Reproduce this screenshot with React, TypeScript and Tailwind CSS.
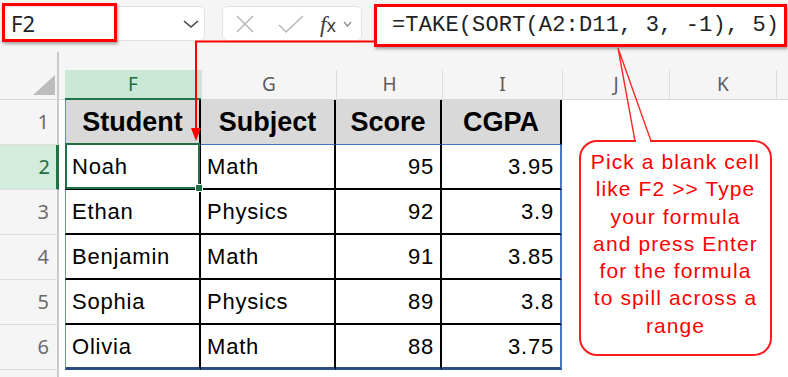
const students = [
  { name: "Noah", subject: "Math", score: 95, cgpa: "3.95" },
  { name: "Ethan", subject: "Physics", score: 92, cgpa: "3.9" },
  { name: "Benjamin", subject: "Math", score: 91, cgpa: "3.85" },
  { name: "Sophia", subject: "Physics", score: 89, cgpa: "3.8" },
  { name: "Olivia", subject: "Math", score: 88, cgpa: "3.75" },
];

const letters = ["G", "H", "I", "J", "K", ""];

const cellFont = "font-['Liberation_Sans',Arial,sans-serif]";
const uiFont = "font-['Noto_Sans','Liberation_Sans',sans-serif]";

function RowHead({ n, active }: { n: number; active?: boolean }) {
  return (
    <div
      className={`flex items-center justify-end border-b border-b-[#dedede] text-[20px] ${uiFont} ${
        active
          ? "bg-[#d3ecdc] text-[#1d6b40] border-r-[3px] border-r-[#217346] pr-[6px]"
          : "bg-[#f5f5f5] text-[#6b6b6b] border-r-2 border-r-[#c9c9c9] pr-[8px]"
      }`}
    >
      {n}
    </div>
  );
}

function HeadCell({ label, first }: { label: string; first?: boolean }) {
  return (
    <div
      className={`flex items-center justify-center bg-[#d9d9d9] border-r-2 border-r-black border-b border-b-[#4472c4] text-[27px] font-bold text-black ${cellFont} ${
        first ? "border-l border-l-[#6a8fcc]" : ""
      }`}
    >
      {label}
    </div>
  );
}

function DataCell({
  value,
  right,
  first,
  last,
  bottom,
  selected,
}: {
  value: string | number;
  right?: boolean;
  first?: boolean;
  last?: boolean;
  bottom?: boolean;
  selected?: boolean;
}) {
  return (
    <div
      className={`relative flex items-center bg-white px-[6px] text-[22px] tracking-[0.8px] text-black ${cellFont} ${
        right ? "justify-end" : "justify-start"
      } ${first ? "border-l border-l-[#6a8fcc]" : ""} ${
        last ? "border-r-2 border-r-[#4a76c0]" : "border-r-2 border-r-black"
      } ${bottom ? "border-b-[3px] border-b-[#2c4d80]" : "border-b-2 border-b-black"}`}
    >
      {value}
      {selected && (
        <div className="absolute -left-[1px] -top-[2px] -right-[1px] -bottom-[1px] z-10 border-2 border-[#1f7145]">
          <div className="absolute -right-[5px] -bottom-[5px] h-[8px] w-[8px] border border-white bg-[#1f7145]" />
        </div>
      )}
    </div>
  );
}

export default function App() {
  return (
    <div className="relative h-[377px] w-[788px] overflow-hidden bg-[#f5f5f5]">
      {/* formula bar */}
      <div className="flex h-[52px] items-start">
        <div className="ml-[4px] mt-[6px] flex h-[35px] w-[201px] items-center justify-between rounded-[5px] border border-[#e3e3e3] bg-white pl-[6px] pr-[5px]">
          <span className={`text-[22px] text-[#222] ${uiFont}`}>F2</span>
          <svg width="16" height="10" viewBox="0 0 16 10">
            <polyline points="1,2 8,8 15,2" fill="none" stroke="#444" strokeWidth="1.6" />
          </svg>
        </div>
        <div className="ml-[17px] mt-[6px] flex h-[35px] w-[140px] items-center rounded-[5px] border border-[#e3e3e3] bg-white pl-[12px]">
          <svg width="20" height="20" viewBox="0 0 20 20">
            <line x1="2" y1="2" x2="18" y2="18" stroke="#b8b8b8" strokeWidth="1.6" />
            <line x1="18" y1="2" x2="2" y2="18" stroke="#b8b8b8" strokeWidth="1.6" />
          </svg>
          <svg width="28" height="20" viewBox="0 0 28 20" className="ml-[22px]">
            <polyline points="2,11 9,18 26,2" fill="none" stroke="#b8b8b8" strokeWidth="1.6" />
          </svg>
          <span className="ml-[15px] text-[23px] leading-none text-[#3c3c3c]">
            <span className="font-['Liberation_Serif',serif] italic">f</span>
            <span className={`text-[18px] ${uiFont}`}>x</span>
          </span>
          <svg width="9" height="6" viewBox="0 0 9 6" className="ml-[7px]">
            <polyline points="1,1 4.5,5 8,1" fill="none" stroke="#888" strokeWidth="1.2" />
          </svg>
        </div>
        <div className="ml-[13px] mt-[5px] flex h-[41px] w-[412px] items-center bg-white pl-[17px]">
          <span className="font-['Liberation_Mono',monospace] text-[22px] tracking-[0.15px] text-[#222] whitespace-nowrap">
            =TAKE(SORT(A2:D11, 3, -1), 5)
          </span>
        </div>
      </div>

      {/* sheet */}
      <div className="grid h-[325px] grid-cols-[59px_6px_136px_135px_106px_120px_107px_107px_1fr] grid-rows-[48px_45px_45px_45px_45px_45px_45px_1fr]">
        <div className="flex items-end justify-end border-r-2 border-r-[#c9c9c9] border-b border-b-[#d5d5d5] pb-[4px] pr-[2px]">
          <svg width="22" height="20" viewBox="0 0 22 20">
            <polygon points="22,0 22,20 0,20" fill="#bcbcbc" />
          </svg>
        </div>
        <div className="border-b border-b-[#d5d5d5]" />
        <div className="pt-[18px]">
          <div className={`flex h-full items-center justify-center border-b-2 border-b-[#217346] bg-[#cbe8d6] text-[19px] text-[#1e6b41] ${uiFont}`}>
            F
          </div>
        </div>
        {letters.map((l, i) => (
          <div key={i} className="border-b border-b-[#d5d5d5] pt-[18px]">
            <div className={`flex h-full items-center justify-center border-l border-l-[#dcdcdc] text-[19px] text-[#5c5c5c] ${uiFont}`}>
              {l}
            </div>
          </div>
        ))}

        {/* row 1: table header */}
        <RowHead n={1} />
        <div className="bg-white" />
        <HeadCell label="Student" first />
        <HeadCell label="Subject" />
        <HeadCell label="Score" />
        <HeadCell label="CGPA" />
        <div className="bg-white" />
        <div className="bg-white" />
        <div className="bg-white" />

        {students.map((s, i) => (
          <div key={s.name} className="contents">
            <RowHead n={i + 2} active={i === 0} />
            <div className="bg-white" />
            <DataCell value={s.name} first bottom={i === 4} selected={i === 0} />
            <DataCell value={s.subject} bottom={i === 4} />
            <DataCell value={s.score} right bottom={i === 4} />
            <DataCell value={s.cgpa} right last bottom={i === 4} />
            <div className="bg-white" />
            <div className="bg-white" />
            <div className="bg-white" />
          </div>
        ))}

        <div className="border-r-2 border-r-[#c9c9c9] bg-[#f5f5f5]" />
        <div className="col-span-8 bg-white" />
      </div>

      {/* highlight boxes */}
      <div className="absolute left-[2px] top-[3px] h-[39px] w-[115px] border-[3px] border-[#ff0000] shadow-[1px_2px_3px_rgba(0,0,0,0.35)]" />
      <div className="absolute left-[374px] top-[4px] h-[43px] w-[413px] border-[3px] border-[#ff0000] shadow-[1px_2px_3px_rgba(0,0,0,0.35)]" />

      {/* callout */}
      <div
        className={`absolute left-[579px] top-[140px] h-[216px] w-[193px] rounded-[18px] border-2 border-[#ff1a1a] bg-white pt-[6px] text-center text-[21px] leading-[27.3px] tracking-[1.1px] text-[#ff0000] ${cellFont}`}
      >
        Pick a blank cell
        <br />
        like F2 &gt;&gt; Type
        <br />
        your formula
        <br />
        and press Enter
        <br />
        for the formula
        <br />
        to spill across a
        <br />
        range
      </div>

      {/* connectors */}
      <svg className="pointer-events-none absolute left-0 top-0 z-20" width="788" height="377" viewBox="0 0 788 377">
        <polyline points="376,41.5 196,41.5 196,130" fill="none" stroke="#ff0000" strokeWidth="2" />
        <polygon points="191,128 201,128 196,141" fill="#ff0000" />
        <rect x="636" y="139" width="14" height="4" fill="#ffffff" />
        <polyline points="635,141 618,48 651,141" fill="none" stroke="#ff2a2a" strokeWidth="1.4" />
      </svg>
    </div>
  );
}
